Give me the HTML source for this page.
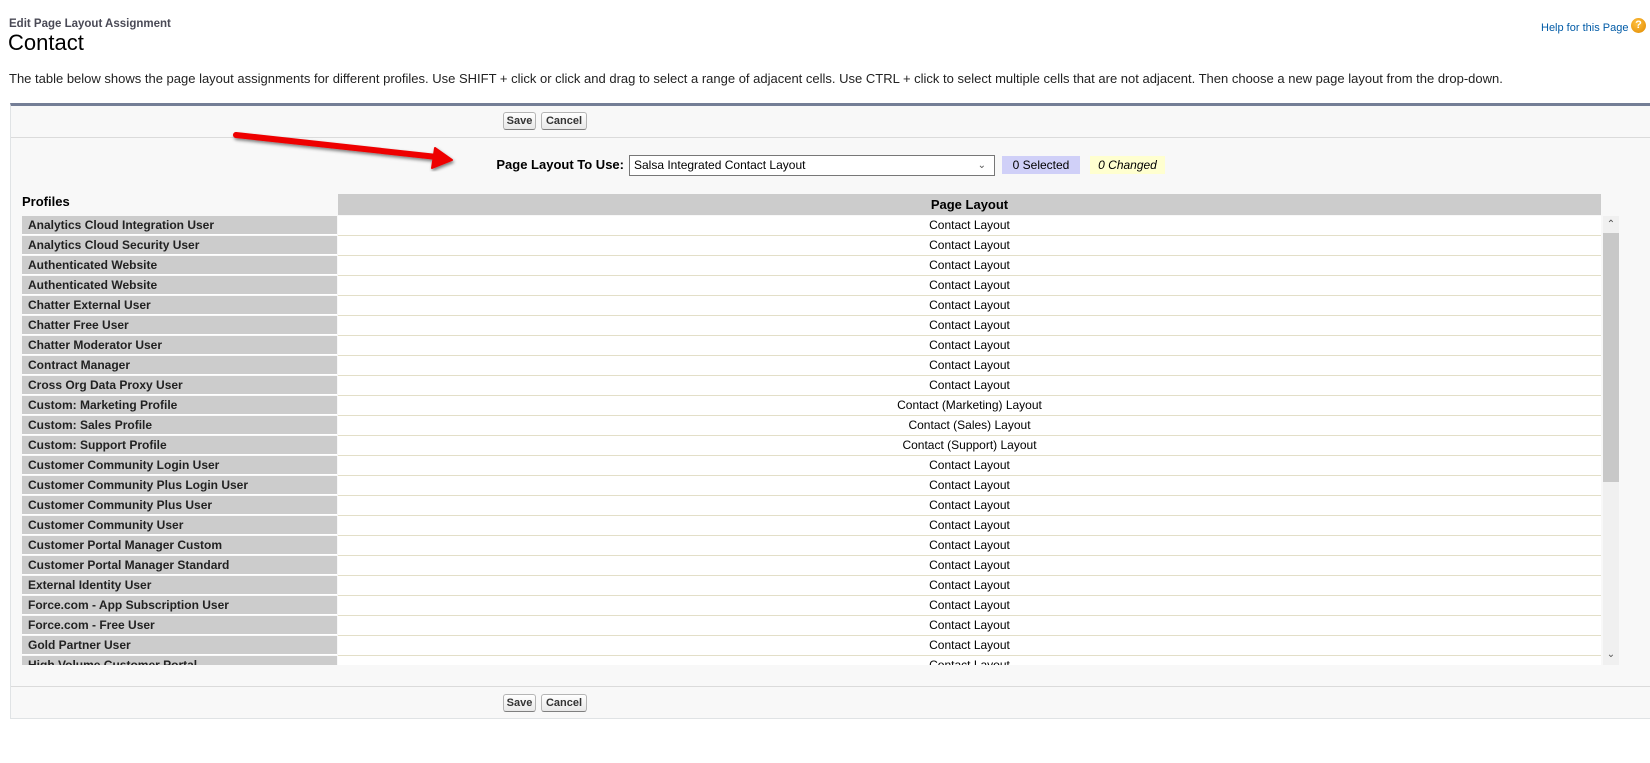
<!DOCTYPE html>
<html><head><meta charset="utf-8"><style>
*{box-sizing:border-box;margin:0;padding:0}
body{width:1650px;height:763px;background:#fff;font-family:"Liberation Sans",Arial,sans-serif;position:relative;overflow:hidden;color:#000}
.abs{position:absolute}
.btn{position:absolute;height:18px;border:1px solid #b5b5b5;border-bottom-color:#7f7f7f;border-radius:3px;background:linear-gradient(#fff,#e8e8e8);font:bold 11px "Liberation Sans",Arial,sans-serif;color:#333;text-align:center;line-height:16px}
.row{position:absolute;left:22px;width:1579px;height:20px}
.row .l{position:absolute;left:0;top:0;width:315px;height:19px;background:#cccccc;font-weight:bold;font-size:12px;line-height:19px;padding-left:6px;color:#222;border-bottom:1px solid #fff}
.row .r{position:absolute;left:316px;top:0;width:1263px;height:20px;background:#fff;border-bottom:1px solid #e3dfc8;text-align:center;font-size:12px;line-height:19px;color:#000}
</style></head><body>
<div class="abs" style="left:9px;top:18px;font-size:11.5px;font-weight:bold;color:#4a4a56">Edit Page Layout Assignment</div>
<div class="abs" style="left:8px;top:30px;font-size:22px;color:#000">Contact</div>
<div class="abs" style="left:1541px;top:22px;font-size:11px;color:#015ba7">Help for this Page</div>
<div class="abs" style="left:1631px;top:18px;width:15px;height:15px;border-radius:50%;background:radial-gradient(circle at 40% 35%,#ffc040,#e08a00);color:#fff;font-size:11px;font-weight:bold;text-align:center;line-height:15px">?</div>
<div class="abs" style="left:9px;top:71px;font-size:13px;color:#222;white-space:nowrap">The table below shows the page layout assignments for different profiles. Use SHIFT + click or click and drag to select a range of adjacent cells. Use CTRL + click to select multiple cells that are not adjacent. Then choose a new page layout from the drop-down.</div>

<div class="abs" style="left:10px;top:103px;width:1640px;height:616px;background:#f8f8f8;border-top:3px solid #747e96;border-left:1px solid #e0e3e5;border-bottom:1px solid #e0e3e5"></div>
<div class="abs" style="left:11px;top:137px;width:1639px;height:1px;background:#dbdbdb"></div>
<div class="btn" style="left:503px;top:112px;width:33px">Save</div>
<div class="btn" style="left:541px;top:112px;width:46px">Cancel</div>

<svg class="abs" style="left:0;top:0" width="480" height="200">
<defs><filter id="s"><feDropShadow dx="1" dy="2" stdDeviation="1.5" flood-color="#000" flood-opacity=".5"/></filter></defs>
<g filter="url(#s)"><path d="M236 135 L437 157" stroke="#e00" stroke-width="6" stroke-linecap="round"/><path d="M435 148 L452 160 L432 168 Z" fill="#e00" stroke="#e00" stroke-width="2" stroke-linejoin="round"/></g>
</svg>

<div class="abs" style="left:440px;width:184px;text-align:right;top:157px;font-size:13px;font-weight:bold">Page Layout To Use:</div>
<div class="abs" style="left:629px;top:155px;width:366px;height:21px;background:#fff;border:1px solid #777;font-size:12px;line-height:19px;padding-left:4px">Salsa Integrated Contact Layout<span style="position:absolute;right:8px;top:0;color:#555;font-size:10px">&#8964;</span></div>
<div class="abs" style="left:1002px;top:156px;width:78px;height:18px;background:#d0d0f8;font-size:12px;line-height:18px;text-align:center">0 Selected</div>
<div class="abs" style="left:1090px;top:156px;width:75px;height:18px;background:#ffffd0;font-size:12px;line-height:18px;text-align:center;font-style:italic">0 Changed</div>

<div class="abs" style="left:22px;top:194px;font-size:13px;font-weight:bold">Profiles</div>
<div class="abs" style="left:338px;top:194px;width:1263px;height:21px;background:#cccccc;font-size:13px;font-weight:bold;text-align:center;line-height:21px">Page Layout</div>

<div class="abs" style="left:0;top:216px;width:1650px;height:449px;overflow:hidden">
<div style="position:relative">
<div class="row" style="top:0"><div class="l">Analytics Cloud Integration User</div><div class="r">Contact Layout</div></div>
<div class="row" style="top:20px"><div class="l">Analytics Cloud Security User</div><div class="r">Contact Layout</div></div>
<div class="row" style="top:40px"><div class="l">Authenticated Website</div><div class="r">Contact Layout</div></div>
<div class="row" style="top:60px"><div class="l">Authenticated Website</div><div class="r">Contact Layout</div></div>
<div class="row" style="top:80px"><div class="l">Chatter External User</div><div class="r">Contact Layout</div></div>
<div class="row" style="top:100px"><div class="l">Chatter Free User</div><div class="r">Contact Layout</div></div>
<div class="row" style="top:120px"><div class="l">Chatter Moderator User</div><div class="r">Contact Layout</div></div>
<div class="row" style="top:140px"><div class="l">Contract Manager</div><div class="r">Contact Layout</div></div>
<div class="row" style="top:160px"><div class="l">Cross Org Data Proxy User</div><div class="r">Contact Layout</div></div>
<div class="row" style="top:180px"><div class="l">Custom: Marketing Profile</div><div class="r">Contact (Marketing) Layout</div></div>
<div class="row" style="top:200px"><div class="l">Custom: Sales Profile</div><div class="r">Contact (Sales) Layout</div></div>
<div class="row" style="top:220px"><div class="l">Custom: Support Profile</div><div class="r">Contact (Support) Layout</div></div>
<div class="row" style="top:240px"><div class="l">Customer Community Login User</div><div class="r">Contact Layout</div></div>
<div class="row" style="top:260px"><div class="l">Customer Community Plus Login User</div><div class="r">Contact Layout</div></div>
<div class="row" style="top:280px"><div class="l">Customer Community Plus User</div><div class="r">Contact Layout</div></div>
<div class="row" style="top:300px"><div class="l">Customer Community User</div><div class="r">Contact Layout</div></div>
<div class="row" style="top:320px"><div class="l">Customer Portal Manager Custom</div><div class="r">Contact Layout</div></div>
<div class="row" style="top:340px"><div class="l">Customer Portal Manager Standard</div><div class="r">Contact Layout</div></div>
<div class="row" style="top:360px"><div class="l">External Identity User</div><div class="r">Contact Layout</div></div>
<div class="row" style="top:380px"><div class="l">Force.com - App Subscription User</div><div class="r">Contact Layout</div></div>
<div class="row" style="top:400px"><div class="l">Force.com - Free User</div><div class="r">Contact Layout</div></div>
<div class="row" style="top:420px"><div class="l">Gold Partner User</div><div class="r">Contact Layout</div></div>
<div class="row" style="top:440px"><div class="l">High Volume Customer Portal</div><div class="r">Contact Layout</div></div>
</div>
<div class="abs" style="left:1603px;top:0;width:16px;height:449px;background:#f0f0f0">
<div class="abs" style="left:0;top:0;width:16px;height:17px;text-align:center;font-size:10px;color:#555;line-height:18px">&#8963;</div>
<div class="abs" style="left:0;top:17px;width:16px;height:249px;background:#c8c8c8"></div>
<div class="abs" style="left:0;top:432px;width:16px;height:17px;text-align:center;font-size:10px;color:#555;line-height:14px">&#8964;</div>
</div>
</div>

<div class="abs" style="left:11px;top:686px;width:1639px;height:1px;background:#dbdbdb"></div>
<div class="btn" style="left:503px;top:694px;width:33px">Save</div>
<div class="btn" style="left:541px;top:694px;width:46px">Cancel</div>
</body></html>
